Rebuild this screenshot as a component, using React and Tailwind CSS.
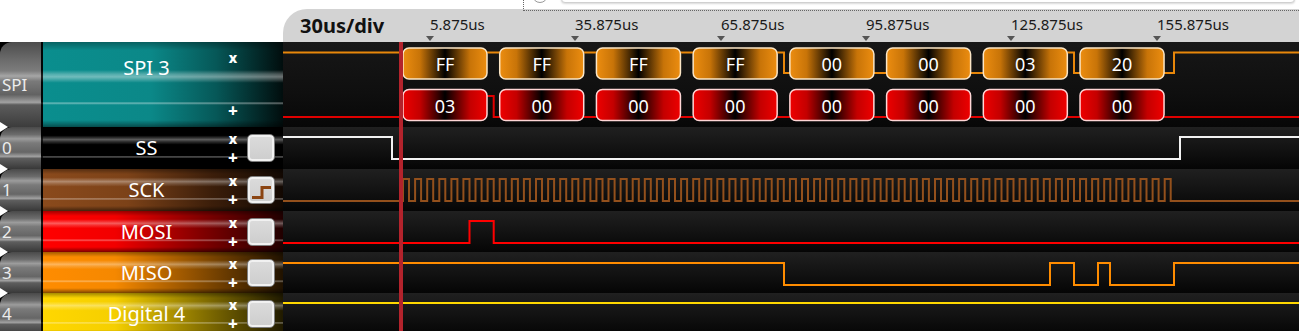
import React from "react";

const X0 = 283;
const W = 1016;
const CLK0 = 403;
const PER = 12.09;

const TICKS = [
  { x: 430, label: "5.875us" },
  { x: 575, label: "35.875us" },
  { x: 721, label: "65.875us" },
  { x: 866, label: "95.875us" },
  { x: 1011, label: "125.875us" },
  { x: 1157, label: "155.875us" },
];

const MOSI_BYTES = ["03", "00", "00", "00", "00", "00", "00", "00"];
const MISO_BYTES = ["FF", "FF", "FF", "FF", "00", "00", "03", "20"];

const SS_EDGES = [392, 1180];
const MOSI_EDGES = [469.5, 493.7];
const MISO_EDGES = [784, 1050, 1074, 1098, 1110, 1174];
const SCK_EDGES = [];
for (let k = 0; k < 64; k++) {
  SCK_EDGES.push(CLK0 + k * PER, CLK0 + k * PER + PER / 2);
}

function stepPath(high, edges, hi, lo) {
  let level = high;
  let d = `M0 ${level ? hi : lo}`;
  for (const e of edges) {
    d += ` H${(e - X0).toFixed(1)}`;
    level = !level;
    d += ` V${level ? hi : lo}`;
  }
  return d + ` H${W}`;
}

function Wave({ h, d, color, width = 2 }) {
  return (
    <svg width={W} height={h} viewBox={`0 0 ${W} ${h}`} className="block">
      <path d={d} fill="none" stroke={color} strokeWidth={width} />
    </svg>
  );
}

function XPlus({ spi }) {
  return (
    <div
      className={
        spi
          ? "flex flex-col items-center self-start pt-[8px] gap-[37px] w-[10px] text-[14px] leading-[16px] font-extrabold text-white"
          : "flex flex-col items-center self-start pt-[4px] gap-[3px] w-[10px] text-[14px] leading-[16px] font-extrabold text-white"
      }
    >
      <span>x</span>
      <span className="text-[17px]">+</span>
    </div>
  );
}

function CheckBox({ edge }) {
  return (
    <div className="w-[28px] h-[28px] rounded-[5px] border border-[#7d7d7d] bg-[linear-gradient(to_bottom,#dcdcdc,#cdcdcd)] shadow-[inset_0_0_0_2px_#f1f1f1]">
      {edge && (
        <svg width="26" height="26" viewBox="0 0 26 26">
          <path d="M4 20.5 H14 V10.5 H23" fill="none" stroke="#8b4513" strokeWidth="3" />
        </svg>
      )}
    </div>
  );
}

function Marker() {
  return (
    <div className="absolute -top-[5px] left-0 w-[8px] h-[10px] bg-white [clip-path:polygon(0_0,100%_50%,0_100%)]" />
  );
}

function Channel({ num, label, h, tab, area, spi, edge, marker }) {
  return (
    <div className="relative flex" style={{ height: h }}>
      {marker && <Marker />}
      <div
        className={`w-[41px] rounded-tl-[12px] flex items-center pl-[2px] text-[17px] text-[#ececec] ${tab}`}
      >
        {num}
      </div>
      <div className={`flex-1 flex items-center border-l-2 border-black/70 ${area}`}>
        <div
          className={
            spi
              ? "flex-1 self-start pt-[12px] pl-[22px] text-center text-[20px] leading-[28px] text-white"
              : "flex-1 pl-[22px] text-center text-[20px] leading-[28px] text-white"
          }
        >
          {label}
        </div>
        <XPlus spi={spi} />
        <div className="w-[28px] ml-[9px] mr-[8px]">{!spi && <CheckBox edge={edge} />}</div>
      </div>
    </div>
  );
}

function Bubbles() {
  return (
    <svg width={W} height={85} viewBox={`0 0 ${W} 85`} className="absolute left-0 top-0">
      <defs>
        <linearGradient id="gOr" x1="0" x2="1" y1="0" y2="0">
          <stop offset="0" stopColor="#ec8d10" />
          <stop offset="0.2" stopColor="#c87408" />
          <stop offset="0.5" stopColor="#000" />
          <stop offset="0.8" stopColor="#c87408" />
          <stop offset="1" stopColor="#ec8d10" />
        </linearGradient>
        <linearGradient id="gRd" x1="0" x2="1" y1="0" y2="0">
          <stop offset="0" stopColor="#ee0000" />
          <stop offset="0.2" stopColor="#c40000" />
          <stop offset="0.5" stopColor="#000" />
          <stop offset="0.8" stopColor="#c40000" />
          <stop offset="1" stopColor="#ee0000" />
        </linearGradient>
      </defs>
      <path d={stepPath(true, MISO_EDGES, 10.5, 31)} fill="none" stroke="#e8870a" strokeWidth="2" />
      <path d={stepPath(false, MOSI_EDGES, 54, 75)} fill="none" stroke="#e00000" strokeWidth="2" />
      {MISO_BYTES.map((b, i) => {
        const x = CLK0 - X0 + i * 96.72;
        return (
          <g key={"o" + i}>
            <rect x={x} y={6} width={84} height={31} rx={6} fill="url(#gOr)" stroke="#fbe6c6" strokeWidth="1.5" />
            <text x={x + 42} y={22} fill="#fff" fontSize="18" textAnchor="middle" dominantBaseline="central" fontFamily="Noto Sans, sans-serif">
              {b}
            </text>
          </g>
        );
      })}
      {MOSI_BYTES.map((b, i) => {
        const x = CLK0 - X0 + i * 96.72;
        return (
          <g key={"r" + i}>
            <rect x={x} y={47.5} width={84} height={31} rx={6} fill="url(#gRd)" stroke="#ffd6d6" strokeWidth="1.5" />
            <text x={x + 42} y={63.5} fill="#fff" fontSize="18" textAnchor="middle" dominantBaseline="central" fontFamily="Noto Sans, sans-serif">
              {b}
            </text>
          </g>
        );
      })}
    </svg>
  );
}

const ROW_BG = "bg-[linear-gradient(to_bottom,#202020_0%,#141414_45%,#050505_100%)]";

export default function App() {
  return (
    <div className="w-[1299px] h-[331px] overflow-hidden bg-white font-['Noto_Sans',sans-serif]">
      {/* header */}
      <div className="flex h-[42px]">
        <div className="w-[283px]" />
        <div className="flex-1 relative pt-[9px]">
          <div className="h-[33px] rounded-tl-[24px] bg-[#d3d3d3] relative flex items-center pl-[17px]">
            <span className="text-[20px] font-bold text-[#111] leading-none">30us/div</span>
            {TICKS.map((t) => (
              <React.Fragment key={t.label}>
                <span
                  className="absolute top-[4px] text-[15px] leading-[22px] text-[#1a1a1a]"
                  style={{ left: t.x - X0 }}
                >
                  {t.label}
                </span>
                <div
                  className="absolute bottom-[1px] w-[8px] h-[5px] bg-[#555] [clip-path:polygon(0_0,100%_0,50%_100%)]"
                  style={{ left: t.x - X0 - 4 }}
                />
              </React.Fragment>
            ))}
          </div>
          <div className="absolute top-0 left-[240px] right-0 h-[11px] border-l border-b border-dotted border-[#666]" />
          <div className="absolute -top-[13px] left-[249px] w-[16px] h-[16px] rounded-full border border-[#999] bg-white" />
          <div className="absolute -top-[20px] left-[278px] right-[4px] h-[23px] rounded-[4px] border border-[#d0d0d0] bg-white shadow-[0_1px_2px_rgba(0,0,0,0.15)]" />
        </div>
      </div>

      {/* body */}
      <div className="flex">
        <div className="w-[283px] bg-black flex flex-col">
          <Channel
            num="SPI"
            label="SPI 3"
            h={85}
            spi
            tab="[background:linear-gradient(to_bottom,#4c4c4c_0%,#6a6a6a_20%,#7c7c7c_34%,#a6a6a6_40%,#7a7a7a_46%,#626262_62%,#a2a2a2_71%,#5c5c5c_74%,#3c3c3c_100%)]"
            area="[background:linear-gradient(to_bottom,rgba(0,0,0,0.3)_0%,transparent_10%,transparent_33%,rgba(255,255,255,0.3)_38%,rgba(255,255,255,0.42)_41%,transparent_48%,transparent_70%,rgba(255,255,255,0.38)_72%,transparent_74%,transparent_92%,rgba(0,0,0,0.45)_100%),linear-gradient(to_right,#0a8e8e_0%,#0b8888_45%,#065858_72%,#010d0d_100%)]"
          />
          <Channel
            num="0"
            label="SS"
            h={42}
            marker
            tab="[background:linear-gradient(to_bottom,#4a4a4a_0%,#6c6c6c_18%,#9c9c9c_28%,#7a7a7a_38%,#666_60%,#a0a0a0_70%,#5e5e5e_75%,#383838_100%)]"
            area="[background:linear-gradient(to_bottom,rgba(0,0,0,0.35)_0%,transparent_12%,transparent_20%,rgba(255,255,255,0.2)_26%,rgba(255,255,255,0.36)_30%,rgba(255,255,255,0.18)_35%,transparent_42%,transparent_68%,rgba(255,255,255,0.36)_71%,transparent_75%,transparent_88%,rgba(0,0,0,0.5)_100%),#000]"
          />
          <Channel
            num="1"
            label="SCK"
            h={42}
            marker
            edge
            tab="[background:linear-gradient(to_bottom,#4a4a4a_0%,#6c6c6c_18%,#9c9c9c_28%,#7a7a7a_38%,#666_60%,#a0a0a0_70%,#5e5e5e_75%,#383838_100%)]"
            area="[background:linear-gradient(to_bottom,rgba(0,0,0,0.35)_0%,transparent_12%,transparent_20%,rgba(255,255,255,0.2)_26%,rgba(255,255,255,0.36)_30%,rgba(255,255,255,0.18)_35%,transparent_42%,transparent_68%,rgba(255,255,255,0.36)_71%,transparent_75%,transparent_88%,rgba(0,0,0,0.5)_100%),linear-gradient(to_right,#8a4a1c_0%,#7c4218_35%,#3c1e0a_70%,#120802_100%)]"
          />
          <Channel
            num="2"
            label="MOSI"
            h={41}
            marker
            tab="[background:linear-gradient(to_bottom,#4a4a4a_0%,#6c6c6c_18%,#9c9c9c_28%,#7a7a7a_38%,#666_60%,#a0a0a0_70%,#5e5e5e_75%,#383838_100%)]"
            area="[background:linear-gradient(to_bottom,rgba(0,0,0,0.35)_0%,transparent_12%,transparent_20%,rgba(255,255,255,0.2)_26%,rgba(255,255,255,0.36)_30%,rgba(255,255,255,0.18)_35%,transparent_42%,transparent_68%,rgba(255,255,255,0.36)_71%,transparent_75%,transparent_88%,rgba(0,0,0,0.5)_100%),linear-gradient(to_right,#ff0000_0%,#f20000_30%,#840000_65%,#200000_100%)]"
          />
          <Channel
            num="3"
            label="MISO"
            h={41}
            marker
            tab="[background:linear-gradient(to_bottom,#4a4a4a_0%,#6c6c6c_18%,#9c9c9c_28%,#7a7a7a_38%,#666_60%,#a0a0a0_70%,#5e5e5e_75%,#383838_100%)]"
            area="[background:linear-gradient(to_bottom,rgba(0,0,0,0.35)_0%,transparent_12%,transparent_20%,rgba(255,255,255,0.2)_26%,rgba(255,255,255,0.36)_30%,rgba(255,255,255,0.18)_35%,transparent_42%,transparent_68%,rgba(255,255,255,0.36)_71%,transparent_75%,transparent_88%,rgba(0,0,0,0.5)_100%),linear-gradient(to_right,#ff8c00_0%,#f58800_30%,#8a4d00_65%,#201200_100%)]"
          />
          <Channel
            num="4"
            label="Digital 4"
            h={42}
            marker
            tab="[background:linear-gradient(to_bottom,#4a4a4a_0%,#6c6c6c_18%,#9c9c9c_28%,#7a7a7a_38%,#666_60%,#a0a0a0_70%,#5e5e5e_75%,#383838_100%)]"
            area="[background:linear-gradient(to_bottom,rgba(0,0,0,0.35)_0%,transparent_12%,transparent_20%,rgba(255,255,255,0.2)_26%,rgba(255,255,255,0.36)_30%,rgba(255,255,255,0.18)_35%,transparent_42%,transparent_68%,rgba(255,255,255,0.36)_71%,transparent_75%,transparent_88%,rgba(0,0,0,0.5)_100%),linear-gradient(to_right,#ffd700_0%,#f5cf00_30%,#8a7400_65%,#201a00_100%)]"
          />
        </div>

        <div className="flex-1 relative flex flex-col bg-black">
          <div className="relative h-[85px] bg-[linear-gradient(to_bottom,#171717_0%,#0f0f0f_60%,#070707_100%)]">
            <Bubbles />
          </div>
          <div className={`h-[42px] ${ROW_BG}`}>
            <Wave h={42} d={stepPath(true, SS_EDGES, 10, 32)} color="#f2f2f2" />
          </div>
          <div className={`h-[42px] ${ROW_BG}`}>
            <Wave h={42} d={stepPath(false, SCK_EDGES, 10, 32)} color="#93501c" />
          </div>
          <div className={`h-[41px] ${ROW_BG}`}>
            <Wave h={41} d={stepPath(false, MOSI_EDGES, 10, 32)} color="#ff0000" />
          </div>
          <div className={`h-[41px] ${ROW_BG}`}>
            <Wave h={41} d={stepPath(true, MISO_EDGES, 11, 33)} color="#ff8c00" />
          </div>
          <div className={`h-[42px] ${ROW_BG}`}>
            <Wave h={42} d={stepPath(true, [], 10, 32)} color="#ffd700" />
          </div>
          <div className="absolute top-0 bottom-0 left-[116px] w-[4px] bg-[#b3232c]" />
        </div>
      </div>
    </div>
  );
}
